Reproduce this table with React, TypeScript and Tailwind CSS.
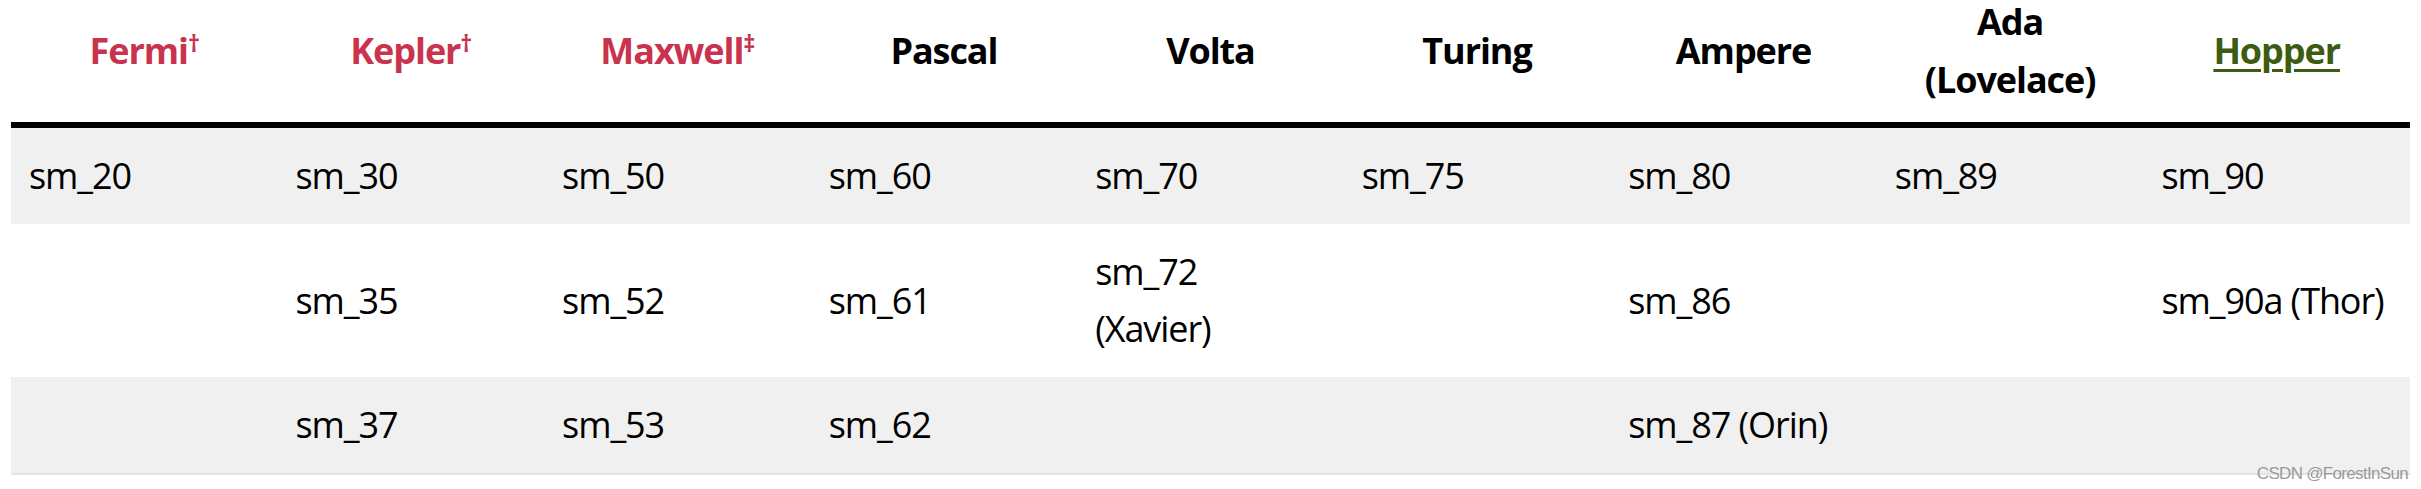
import React from 'react';

const headers: { name: React.ReactNode; key: string }[] = [
  { key: 'fermi', name: <span className="text-[#c9334e]">Fermi<sup className="text-[0.65em]">†</sup></span> },
  { key: 'kepler', name: <span className="text-[#c9334e]">Kepler<sup className="text-[0.65em]">†</sup></span> },
  { key: 'maxwell', name: <span className="text-[#c9334e]">Maxwell<sup className="text-[0.65em]">‡</sup></span> },
  { key: 'pascal', name: 'Pascal' },
  { key: 'volta', name: 'Volta' },
  { key: 'turing', name: 'Turing' },
  { key: 'ampere', name: 'Ampere' },
  { key: 'ada', name: <>Ada<br />(Lovelace)</> },
  { key: 'hopper', name: <a href="#" className="text-[#3d5c12] underline underline-offset-[5px] decoration-[3px]">Hopper</a> },
];

const rows: React.ReactNode[][] = [
  ['sm_20', 'sm_30', 'sm_50', 'sm_60', 'sm_70', 'sm_75', 'sm_80', 'sm_89', 'sm_90'],
  ['', 'sm_35', 'sm_52', 'sm_61', <>sm_72<br />(Xavier)</>, '', 'sm_86', '', <span className="whitespace-nowrap">sm_90a (Thor)</span>],
  ['', 'sm_37', 'sm_53', 'sm_62', '', '', 'sm_87 (Orin)', '', ''],
];

export default function App() {
  return (
    <div className="relative h-[489px] w-[2421px] overflow-hidden bg-white px-[11px] text-black" style={{ fontFamily: '"Open Sans", "Noto Sans", sans-serif' }}>
      <table className="mt-[-29px] w-full table-fixed border-collapse text-[36px] leading-[1.6] tracking-[-0.03em]">
        <thead>
          <tr className="border-b-[6px] border-black">
            {headers.map((h) => (
              <th key={h.key} className="px-[18px] pt-[22px] pb-[14px] text-center align-middle font-bold">
                {h.name}
              </th>
            ))}
          </tr>
        </thead>
        <tbody>
          {rows.map((r, i) => (
            <tr key={i} className={i % 2 === 0 ? 'bg-[#f0f0f0]' : 'bg-white'}>
              {r.map((c, j) => (
                <td key={j} className={`px-[18px] py-[19px] align-middle ${i === rows.length - 1 ? 'border-b-[2px] border-[#e4e4e4]' : ''}`}>
                  {c}
                </td>
              ))}
            </tr>
          ))}
        </tbody>
      </table>
      <div className="absolute right-[13px] top-[465px] text-[17px] leading-none text-[#9a9a9a] tracking-[-0.04em]" style={{ fontFamily: '"Liberation Sans", Arial, sans-serif' }}>
        CSDN @ForestInSun
      </div>
    </div>
  );
}
